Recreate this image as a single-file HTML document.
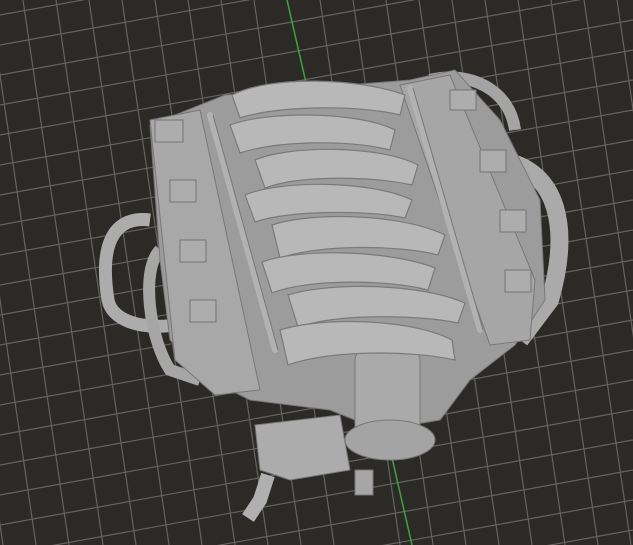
<!DOCTYPE html><html><head><style>html,body{margin:0;padding:0;background:#2b2a27;overflow:hidden;width:633px;height:545px}svg{display:block}</style></head><body>
<svg width="633" height="545" viewBox="0 0 633 545" xmlns="http://www.w3.org/2000/svg">
<rect width="633" height="545" fill="#2b2a27"/>
<g stroke="#64635f" stroke-width="1.2">
<line x1="-110" y1="0" x2="-30" y2="545"/><line x1="-77" y1="0" x2="3" y2="545"/><line x1="-44" y1="0" x2="36" y2="545"/><line x1="-11" y1="0" x2="69" y2="545"/><line x1="23" y1="0" x2="103" y2="545"/><line x1="56" y1="0" x2="136" y2="545"/><line x1="89" y1="0" x2="169" y2="545"/><line x1="122" y1="0" x2="202" y2="545"/><line x1="155" y1="0" x2="235" y2="545"/><line x1="188" y1="0" x2="268" y2="545"/><line x1="221" y1="0" x2="301" y2="545"/><line x1="254" y1="0" x2="334" y2="545"/><line x1="320" y1="0" x2="400" y2="545"/><line x1="353" y1="0" x2="433" y2="545"/><line x1="386" y1="0" x2="466" y2="545"/><line x1="419" y1="0" x2="499" y2="545"/><line x1="452" y1="0" x2="532" y2="545"/><line x1="485" y1="0" x2="565" y2="545"/><line x1="518" y1="0" x2="598" y2="545"/><line x1="551" y1="0" x2="631" y2="545"/><line x1="584" y1="0" x2="664" y2="545"/><line x1="617" y1="0" x2="697" y2="545"/>
<line x1="0" y1="15" x2="633" y2="-100"/><line x1="0" y1="45" x2="633" y2="-70"/><line x1="0" y1="75" x2="633" y2="-40"/><line x1="0" y1="105" x2="633" y2="-10"/><line x1="0" y1="135" x2="633" y2="20"/><line x1="0" y1="165" x2="633" y2="50"/><line x1="0" y1="195" x2="633" y2="80"/><line x1="0" y1="225" x2="633" y2="110"/><line x1="0" y1="255" x2="633" y2="140"/><line x1="0" y1="285" x2="633" y2="170"/><line x1="0" y1="315" x2="633" y2="200"/><line x1="0" y1="345" x2="633" y2="230"/><line x1="0" y1="375" x2="633" y2="260"/><line x1="0" y1="405" x2="633" y2="290"/><line x1="0" y1="435" x2="633" y2="320"/><line x1="0" y1="465" x2="633" y2="350"/><line x1="0" y1="495" x2="633" y2="380"/><line x1="0" y1="525" x2="633" y2="410"/><line x1="0" y1="555" x2="633" y2="440"/><line x1="0" y1="585" x2="633" y2="470"/><line x1="0" y1="615" x2="633" y2="500"/><line x1="0" y1="645" x2="633" y2="530"/>
</g>
<line x1="287" y1="0" x2="412" y2="545" stroke="#3fa33a" stroke-width="1.5"/>
<g fill="#a6a6a6" stroke="#787878" stroke-width="1">
<path d="M150 220 C110 215 100 250 108 300 C112 320 140 330 175 325" fill="none" stroke="#acacac" stroke-width="13"/>
<path d="M160 250 C140 270 150 340 170 370 L200 380" fill="none" stroke="#a6a6a6" stroke-width="12"/>
<path d="M500 160 C560 170 570 230 550 300 L520 340" fill="none" stroke="#aaaaaa" stroke-width="18"/>
<path d="M430 80 C470 70 510 90 515 130" fill="none" stroke="#a4a4a4" stroke-width="12"/>
<path d="M150 125 L225 95 L410 80 L455 70 L500 120 L540 200 L545 300 L515 345 L470 380 L440 420 L380 430 L330 410 L250 400 L210 380 L170 340 L160 260 Z" fill="#9c9c9c"/>
<path d="M150 120 L200 110 L260 390 L215 395 L175 360 Z" fill="#a8a8a8"/>
<path d="M400 85 L450 75 L535 280 L530 340 L490 345 L460 260 Z" fill="#a6a6a6"/>
<rect x="355" y="350" width="65" height="100" rx="10" fill="#aaaaaa"/>
<ellipse cx="390" cy="440" rx="45" ry="20" fill="#a4a4a4"/>
<path d="M255 425 L340 415 L350 470 L290 480 L260 470 Z" fill="#acacac"/>
<path d="M268 475 L260 500 L248 518" fill="none" stroke="#b0b0b0" stroke-width="14"/>
<rect x="355" y="470" width="18" height="25" fill="#a6a6a6"/>
</g>
<g fill="#b8b8b8" stroke="#7a7a7a" stroke-width="1.2">
<path d="M232 95 C270 75 360 78 405 95 L400 115 C360 105 280 105 240 118 Z"/>
<path d="M230 125 C270 110 360 112 395 130 L390 150 C350 140 280 140 240 153 Z"/>
<path d="M255 160 C290 145 380 145 418 165 L412 185 C370 176 300 175 265 188 Z"/>
<path d="M245 195 C280 180 370 180 412 200 L405 218 C370 210 290 210 255 222 Z"/>
<path d="M272 225 C310 212 400 213 445 235 L438 255 C400 245 320 244 280 258 Z"/>
<path d="M262 262 C300 248 390 250 435 268 L428 290 C390 280 310 278 272 293 Z"/>
<path d="M288 295 C330 282 420 283 465 303 L458 323 C420 315 340 313 298 327 Z"/>
<path d="M280 330 C320 317 410 318 452 340 L455 360 C410 350 330 350 288 365 Z"/>
</g>
<g stroke="#b2b2b2" stroke-width="6" stroke-linecap="round">
<line x1="210" y1="115" x2="275" y2="350"/>
<line x1="410" y1="88" x2="480" y2="330"/>
</g>
<g stroke="#777" stroke-width="1"><line x1="213" y1="115" x2="278" y2="350"/><line x1="413" y1="88" x2="483" y2="330"/></g>
<g fill="#adadad" stroke="#747474">
<rect x="155" y="120" width="28" height="22"/><rect x="170" y="180" width="26" height="22"/><rect x="180" y="240" width="26" height="22"/><rect x="190" y="300" width="26" height="22"/>
<rect x="450" y="90" width="26" height="20"/><rect x="480" y="150" width="26" height="22"/><rect x="500" y="210" width="26" height="22"/><rect x="505" y="270" width="26" height="22"/>
</g>
</svg>
</body></html>
